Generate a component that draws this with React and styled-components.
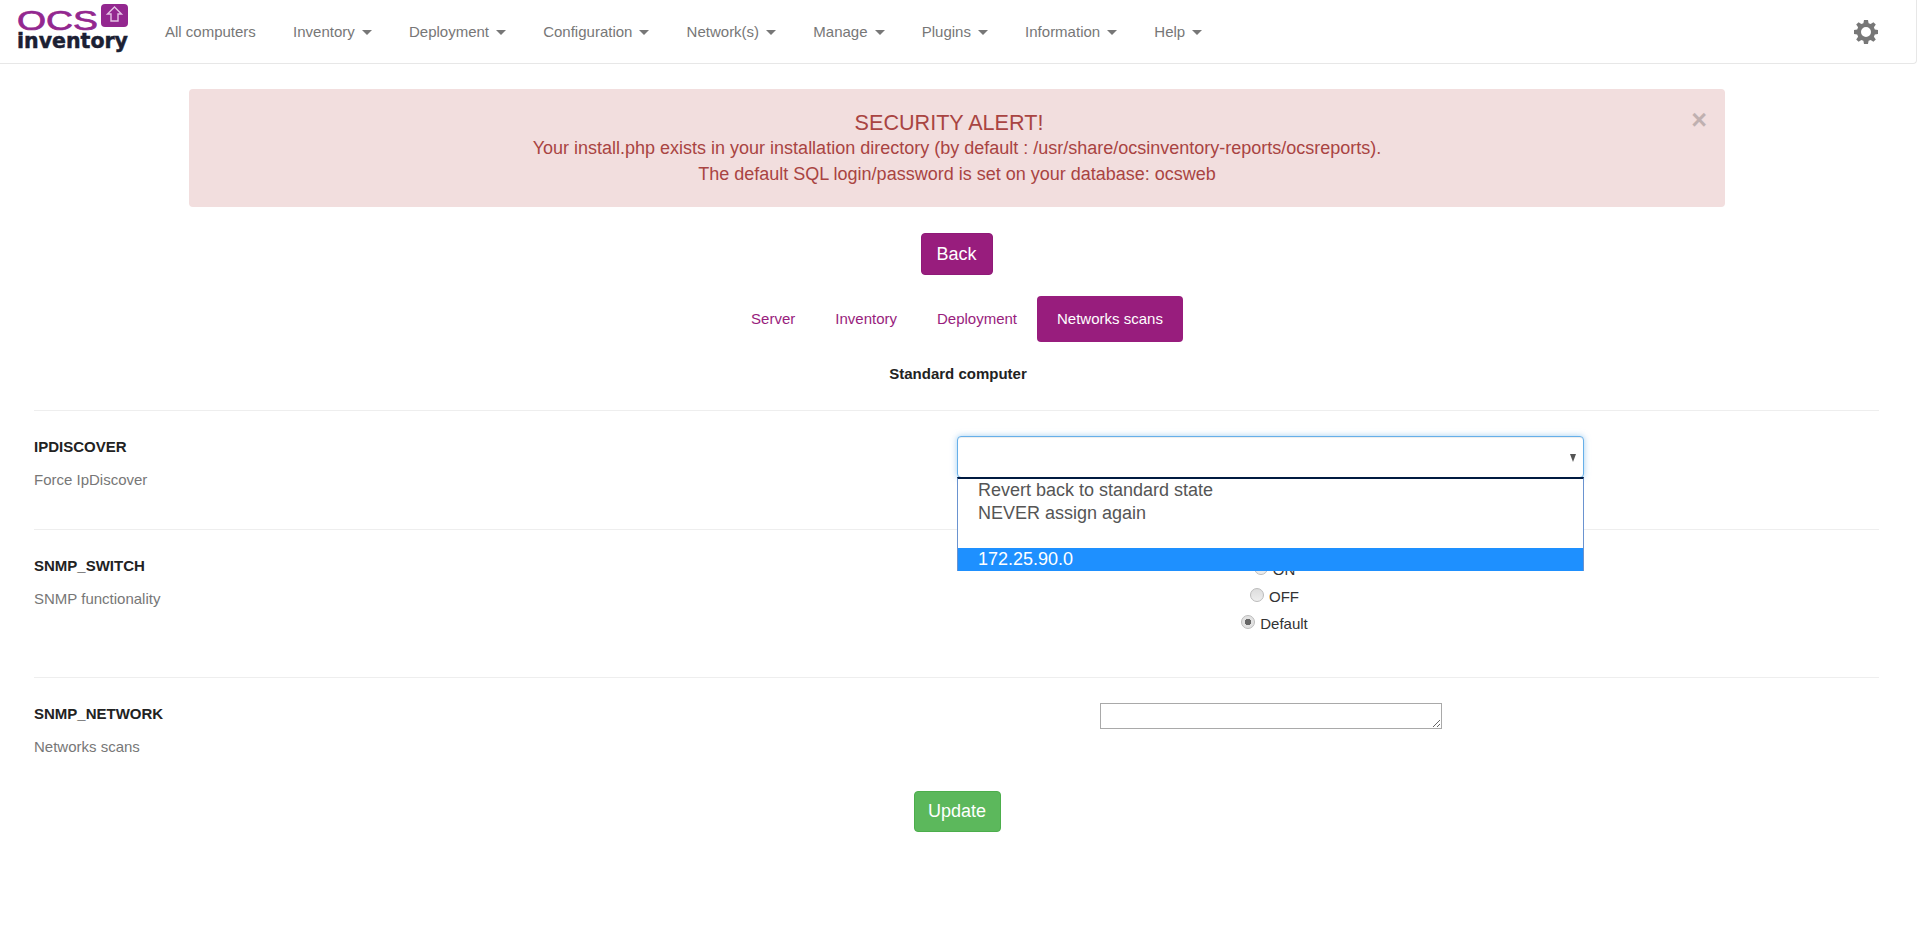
import React from "react";
import styled, { createGlobalStyle } from "styled-components";

const Global = createGlobalStyle`
  html, body { margin: 0; padding: 0; background: #fff; }
  body { font-family: "Liberation Sans", Arial, sans-serif; font-size: 15px; line-height: 20px; color: #333; }
`;
const Page = styled.div`min-height: 947px; background: #fff; overflow: hidden;`;
const Navbar = styled.nav`
  height: 63px; box-sizing: content-box; border-bottom: 1px solid #e7e7e7; border-right: 1px solid #e7e7e7;
  border-bottom-right-radius: 4px; display: flex; align-items: center; padding-left: 17px; padding-right: 38px;
`;
const Brand = styled.svg`width: 111px; height: 50px; flex: none; align-self: flex-start; margin-top: 4px; overflow: visible;`;
const NavList = styled.ul`display: flex; list-style: none; margin: 0 0 0 37px; padding: 0; gap: 37.2px; flex: 1;`;
const NavItem = styled.li`color: #777; font-size: 15px; line-height: 20px; display: flex; align-items: center; white-space: nowrap;`;
const Caret = styled.span`
  width: 0; height: 0; margin-left: 7px; margin-top: 2px;
  border-top: 5px solid #777; border-left: 5px solid transparent; border-right: 5px solid transparent;
`;
const Alert = styled.div`
  position: relative; margin: 25px 192px 0 189px; height: 118px; box-sizing: border-box; padding-top: 20px;
  background: #f2dede; border-radius: 4px; color: #a94442; text-align: center; font-size: 18px; line-height: 26px;
`;
const AlertTitle = styled.div`font-size: 21.6px; line-height: 26px; padding-right: 16px; margin-top: 1px; margin-bottom: -1px;`;
const Close = styled.span`
  position: absolute; right: 18px; top: 19px; font-size: 27px; font-weight: bold; line-height: 24px; color: #000; opacity: .2;
`;
const Center = styled.div`display: flex; justify-content: center; padding-right: 4px;`;
const PurpleButton = styled.button`
  margin-top: 26px; width: 72px; height: 42px; padding: 0; border: 1px solid #8f1a78; border-radius: 4px;
  background: #981d7d; color: #fff; font: 18px "Liberation Sans", Arial, sans-serif;
`;
const Tabs = styled.div`display: flex; justify-content: center; margin-top: 21px; padding-right: 3px;`;
const Tab = styled.div`
  height: 46px; display: flex; align-items: center; padding: 0 20px; font-size: 15px; border-radius: 4px;
  color: ${p => p.$active ? "#fff" : "#981d7d"}; background: ${p => p.$active ? "#981d7d" : "transparent"};
`;
const Heading = styled.div`margin-top: 22px; text-align: center; font-weight: bold; font-size: 15px; line-height: 20px; color: #222; padding-right: 1px;`;
const Rows = styled.div`margin: 0 38px 0 34px; padding-top: 26px;`;
const Row = styled.div`
  display: grid; grid-template-columns: 923px 627px 1fr; border-top: 1px solid #eee; height: ${p => p.$h}px; box-sizing: border-box;
`;
const Label = styled.div`padding-top: 26px;`;
const Key = styled.div`font-weight: bold; font-size: 15px; line-height: 20px; color: #222;`;
const Desc = styled.div`margin-top: 13px; font-size: 15px; line-height: 20px; color: #777;`;
const Control = styled.div`position: relative;`;
const SelectBox = styled.div`
  position: absolute; left: 0; right: 0; top: 25px; height: 42px; box-sizing: border-box; background: #fff;
  border: 1px solid #66afe9; border-radius: 4px; box-shadow: inset 0 1px 1px rgba(0,0,0,.075), 0 0 6px rgba(102,175,233,.6);
`;
const SelectArrow = styled.span`position: absolute; right: 7px; top: 17px; width: 0; height: 0;
  border-top: 8px solid #555; border-left: 3.5px solid transparent; border-right: 3.5px solid transparent;`;
const Dropdown = styled.div`
  position: absolute; z-index: 2; left: 0; right: 0; top: 66px; height: 94px; box-sizing: border-box; overflow: hidden; background: #fff;
  border-top: 2px solid #001a40; border-left: 1px solid #6a93d0; border-right: 1px solid #6a93d0; font-size: 18px; color: #555;
`;
const Option = styled.div`
  height: 23px; line-height: 23px; padding-left: 20px;
  background: ${p => p.$selected ? "#1e90ff" : "transparent"}; color: ${p => p.$selected ? "#fff" : "#555"};
`;
const Radios = styled.div`display: flex; flex-direction: column; align-items: center; padding: 30px 0 0 8px; gap: 7px; font-size: 15px; color: #333;`;
const RadioLabel = styled.label`display: flex; align-items: center; height: 20px; gap: 5px;`;
const Radio = styled.input`
  appearance: none; margin: 0 0 4px; width: 14px; height: 14px; border-radius: 50%; border: 1px solid #bbb; box-sizing: border-box;
  background: ${p => p.$on ? "radial-gradient(circle, #666 0 3px, #e2e2e2 3.5px)" : "linear-gradient(#ddd, #eee)"};
`;
const TextBox = styled.textarea`
  display: block; margin: 25px auto 0; width: 342px; height: 26px; box-sizing: border-box; padding: 2px; border: 1px solid #a9a9a9; border-radius: 0; background: #fff;
`;
const GreenButton = styled.button`
  margin: 0 0 0 1px; width: 87px; height: 41px; padding: 0; border: 1px solid #4cae4c; border-radius: 4px; background: #5cb85c; color: #fff;
  font: 18px "Liberation Sans", Arial, sans-serif;
`;

const Gear = () => (
  <svg width="24" height="24" viewBox="0 0 24 24" fill="#777">
    <path fillRule="evenodd" d="M10 0h4l.6 3.2 2.1.9L19.4 2.2l2.4 2.4-1.9 2.7.9 2.1 3.2.6v4l-3.2.6-.9 2.1 1.9 2.7-2.4 2.4-2.7-1.9-2.1.9L14 24h-4l-.6-3.2-2.1-.9-2.7 1.9-2.4-2.4 1.9-2.7-.9-2.1L0 14v-4l3.2-.6.9-2.1-1.9-2.7 2.4-2.4 2.7 1.9 2.1-.9zM12 7a5 5 0 1 0 0 10 5 5 0 0 0 0-10z" />
  </svg>
);

const items = [["All computers", false], ["Inventory", true], ["Deployment", true], ["Configuration", true], ["Network(s)", true], ["Manage", true], ["Plugins", true], ["Information", true], ["Help", true]];

export default function App() {
  return (
    <Page>
      <Global />
      <Navbar>
        <Brand viewBox="0 0 111 50">
          <text x="0" y="26" fontFamily="Liberation Sans, sans-serif" fontSize="27" fill="#93278f" stroke="#93278f" strokeWidth=".7" textLength="81" lengthAdjust="spacingAndGlyphs">OCS</text>
          <rect x="84" y="0" width="27" height="23" rx="4" fill="#93278f" />
          <path d="M97.5 3l7 7h-3.5v7h-7v-7h-3.5z" fill="none" stroke="#e5c4e5" strokeWidth="1.4" />
          <text x="0" y="44" fontFamily="DejaVu Sans, sans-serif" fontSize="21" fontWeight="700" fill="#1b2033" stroke="#1b2033" strokeWidth=".5" textLength="111" lengthAdjust="spacingAndGlyphs">inventory</text>
        </Brand>
        <NavList>
          {items.map(([t, c]) => <NavItem key={t}>{t}{c && <Caret />}</NavItem>)}
        </NavList>
        <Gear />
      </Navbar>
      <Alert>
        <Close>×</Close>
        <AlertTitle>SECURITY ALERT!</AlertTitle>
        <div>Your install.php exists in your installation directory (by default : /usr/share/ocsinventory-reports/ocsreports).</div>
        <div>The default SQL login/password is set on your database: ocsweb</div>
      </Alert>
      <Center><PurpleButton>Back</PurpleButton></Center>
      <Tabs>
        <Tab>Server</Tab><Tab>Inventory</Tab><Tab>Deployment</Tab><Tab $active>Networks scans</Tab>
      </Tabs>
      <Heading>Standard computer</Heading>
      <Rows>
        <Row $h={119}>
          <Label><Key>IPDISCOVER</Key><Desc>Force IpDiscover</Desc></Label>
          <Control>
            <SelectBox><SelectArrow /></SelectBox>
            <Dropdown>
              <Option>Revert back to standard state</Option>
              <Option>NEVER assign again</Option>
              <Option />
              <Option $selected>172.25.90.0</Option>
            </Dropdown>
          </Control>
        </Row>
        <Row $h={148}>
          <Label><Key>SNMP_SWITCH</Key><Desc>SNMP functionality</Desc></Label>
          <Radios>
            <RadioLabel><Radio type="radio" name="s" />ON</RadioLabel>
            <RadioLabel><Radio type="radio" name="s" />OFF</RadioLabel>
            <RadioLabel><Radio type="radio" name="s" $on defaultChecked />Default</RadioLabel>
          </Radios>
        </Row>
        <Row $h={114}>
          <Label><Key>SNMP_NETWORK</Key><Desc>Networks scans</Desc></Label>
          <Control><TextBox /></Control>
        </Row>
      </Rows>
      <Center><GreenButton>Update</GreenButton></Center>
    </Page>
  );
}
